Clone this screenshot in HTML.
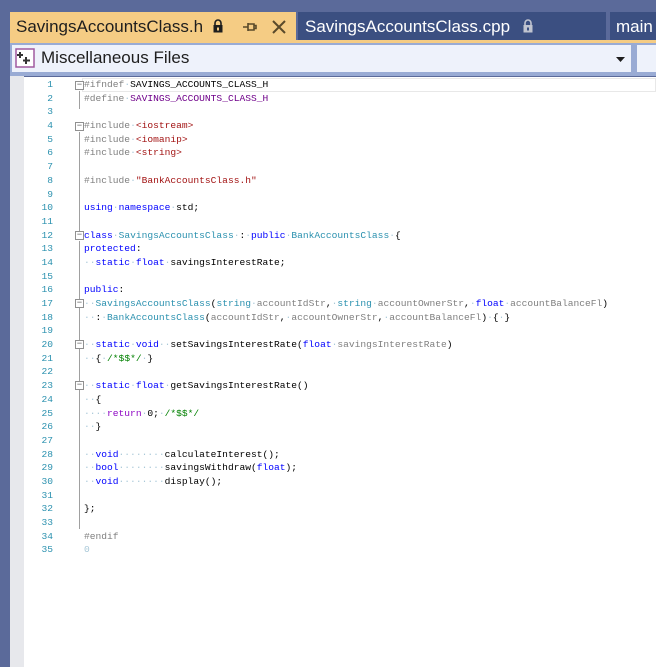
<!DOCTYPE html>
<html><head><meta charset="utf-8"><style>
*{margin:0;padding:0;box-sizing:border-box}
body{width:656px;height:667px;overflow:hidden;background:#5b6a9a;position:relative;font-family:"Liberation Sans",sans-serif}
.tab{position:absolute;top:12px;height:30px;font-size:17px;line-height:30px;white-space:nowrap;overflow:hidden}
#t1{left:10px;width:286px;background:#f5cc84;color:#1e1e1e;padding-left:6px}
#t2{left:298px;width:308px;background:#3b4f81;color:#fff;padding-left:7px}
#t3{left:610px;width:46px;background:#3b4f81;color:#fff;padding-left:6px}
#ob{position:absolute;left:10px;top:40px;width:646px;height:3px;background:#f5cc84}
#nav{position:absolute;left:10px;top:43px;width:646px;height:33px;background:#99abd4}
#dd{position:absolute;left:12px;top:45px;width:619px;height:27px;background:#eef2fb}
#dd2{position:absolute;left:637px;top:45px;width:19px;height:27px;background:#eef2fb}
#ed{position:absolute;left:24px;top:77px;width:632px;height:590px;background:#fff}
#gut{position:absolute;left:10px;top:76px;width:14px;height:591px;background:#e7e8ec}
#code{position:absolute;left:24px;top:78px;font-family:"Liberation Mono",monospace;font-size:9.6px;line-height:13.68px;white-space:pre;color:#000}
.ln{display:inline-block;width:29px;text-align:right;color:#2b91af;margin-right:31px}
.k{color:#0000ff}.t{color:#2b91af}.s{color:#a31515}.p{color:#808080}.m{color:#6f008a}.c{color:#008000}.r{color:#8f08c4}.d{color:#a8c8d8}.g{color:#808080}
#hl{position:absolute;left:82px;top:78px;width:574px;height:14px;border:1px solid #e8e8e8}
.vl{position:absolute;border-left:1px solid #a0a0a0}
.bx{position:absolute;width:9px;height:9px;border:1px solid #909090;background:#fff;font:9px/7px "Liberation Mono";text-align:center;color:#555}
svg{position:absolute}
</style></head><body>
<div class="tab" id="t1">SavingsAccountsClass.h</div>
<svg style="left:213px;top:19px" width="10" height="14"><path d="M2 6V4a3 3 0 0 1 6 0v2" fill="none" stroke="#1e1e1e" stroke-width="1.6"/><rect x="0.5" y="6" width="9" height="7.5" fill="#1e1e1e"/><rect x="4" y="8.5" width="2" height="3" fill="#f5cc84"/></svg>
<svg style="left:243px;top:21px" width="14" height="12"><path d="M0 6h5M5 2v8M5 3h6v6h-6M11 4.5h2v3h-2" fill="none" stroke="#5a4a2a" stroke-width="1.6"/></svg>
<svg style="left:272px;top:20px" width="14" height="14"><path d="M1 1L13 13M13 1L1 13" stroke="#5a4a2a" stroke-width="2"/></svg>
<div class="tab" id="t2">SavingsAccountsClass.cpp</div>
<svg style="left:523px;top:19px" width="10" height="14"><path d="M2 6V4a3 3 0 0 1 6 0v2" fill="none" stroke="#c0c4d0" stroke-width="1.6"/><rect x="0.5" y="6" width="9" height="7.5" fill="#c0c4d0"/><rect x="4" y="8.5" width="2" height="3" fill="#3b4f81"/></svg>
<div class="tab" id="t3">main</div>
<div id="ob"></div>
<div id="nav"></div>
<div id="dd"><svg style="left:3px;top:3px" width="20" height="20"><rect x="1" y="1" width="18" height="18" fill="#fff" stroke="#a05aa0" stroke-width="1.5"/><path d="M5 4v6M2 7h6M11 9v7M8 12.5h7" stroke="#333" stroke-width="2"/></svg><span style="position:absolute;left:29px;top:3px;font-size:17px;color:#1e1e1e">Miscellaneous Files</span><svg style="left:604px;top:12px" width="9" height="5"><path d="M0 0h9L4.5 5z" fill="#1e1e1e"/></svg></div>
<div id="dd2"></div>
<div id="gut"></div>
<div id="ed"></div>
<div id="hl"></div>
<div class="vl" style="left:79px;top:91px;height:18px"></div>
<div class="vl" style="left:79px;top:132px;height:100px"></div>
<div class="vl" style="left:79px;top:241px;height:288px"></div>
<div class="bx" style="left:75px;top:81px">−</div>
<div class="bx" style="left:75px;top:122px">−</div>
<div class="bx" style="left:75px;top:231px">−</div>
<div class="bx" style="left:75px;top:299px">−</div>
<div class="bx" style="left:75px;top:340px">−</div>
<div class="bx" style="left:75px;top:381px">−</div>
<div id="code"><span class="ln">1</span><span class="p">#ifndef</span><span class="d">·</span>SAVINGS_ACCOUNTS_CLASS_H
<span class="ln">2</span><span class="p">#define</span><span class="d">·</span><span class="m">SAVINGS_ACCOUNTS_CLASS_H</span>
<span class="ln">3</span>
<span class="ln">4</span><span class="p">#include</span><span class="d">·</span><span class="s">&lt;iostream&gt;</span>
<span class="ln">5</span><span class="p">#include</span><span class="d">·</span><span class="s">&lt;iomanip&gt;</span>
<span class="ln">6</span><span class="p">#include</span><span class="d">·</span><span class="s">&lt;string&gt;</span>
<span class="ln">7</span>
<span class="ln">8</span><span class="p">#include</span><span class="d">·</span><span class="s">"BankAccountsClass.h"</span>
<span class="ln">9</span>
<span class="ln">10</span><span class="k">using</span><span class="d">·</span><span class="k">namespace</span><span class="d">·</span>std;
<span class="ln">11</span>
<span class="ln">12</span><span class="k">class</span><span class="d">·</span><span class="t">SavingsAccountsClass</span><span class="d">·</span>:<span class="d">·</span><span class="k">public</span><span class="d">·</span><span class="t">BankAccountsClass</span><span class="d">·</span>{
<span class="ln">13</span><span class="k">protected</span>:
<span class="ln">14</span><span class="d">··</span><span class="k">static</span><span class="d">·</span><span class="k">float</span><span class="d">·</span>savingsInterestRate;
<span class="ln">15</span>
<span class="ln">16</span><span class="k">public</span>:
<span class="ln">17</span><span class="d">··</span><span class="t">SavingsAccountsClass</span>(<span class="t">string</span><span class="d">·</span><span class="g">accountIdStr</span>,<span class="d">·</span><span class="t">string</span><span class="d">·</span><span class="g">accountOwnerStr</span>,<span class="d">·</span><span class="k">float</span><span class="d">·</span><span class="g">accountBalanceFl</span>)
<span class="ln">18</span><span class="d">··</span>:<span class="d">·</span><span class="t">BankAccountsClass</span>(<span class="g">accountIdStr</span>,<span class="d">·</span><span class="g">accountOwnerStr</span>,<span class="d">·</span><span class="g">accountBalanceFl</span>)<span class="d">·</span>{<span class="d">·</span>}
<span class="ln">19</span>
<span class="ln">20</span><span class="d">··</span><span class="k">static</span><span class="d">·</span><span class="k">void</span><span class="d">··</span>setSavingsInterestRate(<span class="k">float</span><span class="d">·</span><span class="g">savingsInterestRate</span>)
<span class="ln">21</span><span class="d">··</span>{<span class="d">·</span><span class="c">/*$$*/</span><span class="d">·</span>}
<span class="ln">22</span>
<span class="ln">23</span><span class="d">··</span><span class="k">static</span><span class="d">·</span><span class="k">float</span><span class="d">·</span>getSavingsInterestRate()
<span class="ln">24</span><span class="d">··</span>{
<span class="ln">25</span><span class="d">····</span><span class="r">return</span><span class="d">·</span>0;<span class="d">·</span><span class="c">/*$$*/</span>
<span class="ln">26</span><span class="d">··</span>}
<span class="ln">27</span>
<span class="ln">28</span><span class="d">··</span><span class="k">void</span><span class="d">········</span>calculateInterest();
<span class="ln">29</span><span class="d">··</span><span class="k">bool</span><span class="d">········</span>savingsWithdraw(<span class="k">float</span>);
<span class="ln">30</span><span class="d">··</span><span class="k">void</span><span class="d">········</span>display();
<span class="ln">31</span>
<span class="ln">32</span>};
<span class="ln">33</span>
<span class="ln">34</span><span class="p">#endif</span>
<span class="ln">35</span><span class="d">0</span>
</div>
</body></html>
